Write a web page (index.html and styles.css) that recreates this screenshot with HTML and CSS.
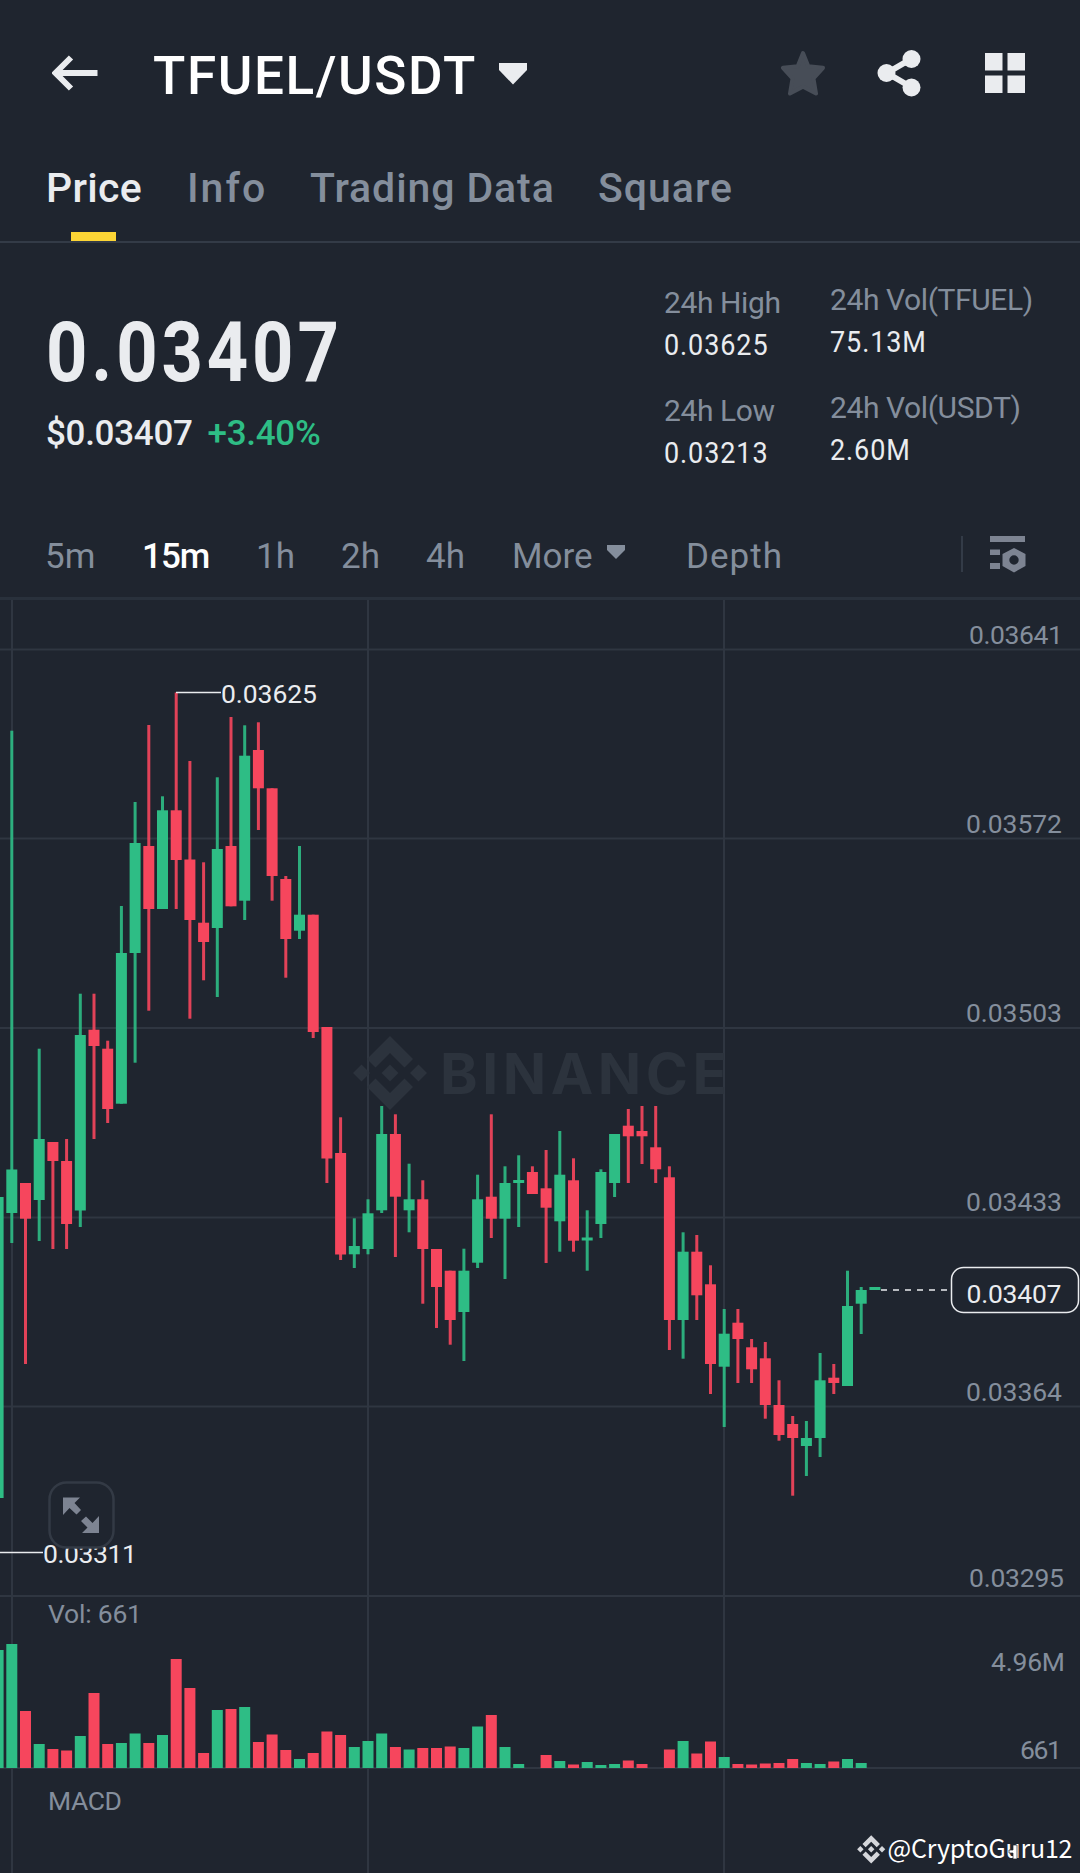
FILE: index.html
```html
<!DOCTYPE html>
<html lang="en">
<head>
    <meta charset="UTF-8">
    <meta name="viewport" content="width=device-width, initial-scale=1.0">
    <title>TFUEL/USDT</title>
    <link rel="stylesheet" href="styles.css">
</head>
<body>

<header class="topbar">
    <svg class="back" width="46" height="36" viewBox="0 0 46 36">
        <path d="M19 2.500L3.500 18L19 33.500M4 18H45.500" fill="none" stroke="#eaecef" stroke-width="6"/>
    </svg>
    <h1 class="pair">TFUEL/USDT</h1>
    <svg class="pair-caret" width="28" height="22" viewBox="0 0 28 22">
        <path d="M0 0H28V7L14 21.500L0 7Z" fill="#eaecef"/>
    </svg>
    <div class="actions">
        <svg width="46" height="46" viewBox="0 0 46 46">
            <path d="M23 3L28.300 16.200L43 17.800L33.500 28.500L36 43.500L23 36.800L10 43.500L12.500 28.500L3 17.800L17.700 16.200Z" fill="#474d57" stroke="#474d57" stroke-width="4" stroke-linejoin="round"/>
        </svg>
        <svg width="44" height="48" viewBox="0 0 44 48">
            <path d="M34 10L10 24L34 38" fill="none" stroke="#eaecef" stroke-width="6"/>
            <circle cx="34.500" cy="10" r="9" fill="#eaecef"/>
            <circle cx="9.500" cy="24" r="9" fill="#eaecef"/>
            <circle cx="34.500" cy="38.500" r="9" fill="#eaecef"/>
        </svg>
        <svg width="40" height="40" viewBox="0 0 40 40">
            <path d="M0 0H17.500V17.500H0ZM22.500 0H40V17.500H22.500ZM0 22.500H17.500V40H0ZM22.500 22.500H40V40H22.500Z" fill="#eaecef"/>
        </svg>
    </div>
</header>

<nav class="tabs">
    <a class="tab active">Price</a>
    <a class="tab info">Info</a>
    <a class="tab trading">Trading Data</a>
    <a class="tab square">Square</a>
</nav>

<section class="summary">
    <div class="quote">
        <div class="last">0.03407</div>
        <div class="sub"><span class="usd">$0.03407</span><span class="change">+3.40%</span></div>
    </div>
    <div class="stats range">
        <div class="label">24h High</div>
        <div class="value">0.03625</div>
        <div class="label">24h Low</div>
        <div class="value">0.03213</div>
    </div>
    <div class="stats volume">
        <div class="label">24h Vol(TFUEL)</div>
        <div class="value">75.13M</div>
        <div class="label">24h Vol(USDT)</div>
        <div class="value">2.60M</div>
    </div>
</section>

<div class="intervals">
    <span class="m5">5m</span>
    <span class="m15">15m</span>
    <span class="h1">1h</span>
    <span class="h2">2h</span>
    <span class="h4">4h</span>
    <span class="more">More</span>
    <svg class="more-caret" width="18" height="14" viewBox="0 0 18 14"><path d="M0 0H18V5L9 14L0 5Z" fill="#848e9c"/></svg>
    <span class="depth">Depth</span>
    <i class="divider"></i>
    <svg class="settings" width="36" height="38" viewBox="0 0 36 38">
        <path d="M0 1H35V7H0ZM0 14.500H10V20H0ZM0 28H10V34H0Z" fill="#7d8492"/>
        <path fill-rule="evenodd" d="M24 13L35.500 19V31L24 37.500L12.500 31V19ZM24 20.300A4.700 4.700 0 1 0 24 29.700A4.700 4.700 0 1 0 24 20.300Z" fill="#7d8492"/>
    </svg>
</div>

<svg class="chart" width="1080" height="1273" viewBox="0 600 1080 1273">
    <!-- grid -->
    <g class="grid">
        <path d="M0 649.500H1080M0 838.500H1080M0 1028H1080M0 1217.500H1080M0 1406.500H1080M0 1596H1080M0 1768H1080"/>
        <path d="M12 599V1873M368 599V1873M724 599V1873"/>
    </g>

    <!-- watermark -->
    <g class="watermark">
        <g id="logo">
            <path d="M390 1036L413 1059L404.500 1067.500L390 1053L375.500 1067.500L367 1059Z"/>
            <path d="M390 1110L413 1087L404.500 1078.500L390 1093L375.500 1078.500L367 1087Z"/>
            <path d="M390 1064.500L398.500 1073L390 1081.500L381.500 1073Z"/>
            <path d="M361.500 1064.500L370 1073L361.500 1081.500L353 1073Z"/>
            <path d="M418.500 1064.500L427 1073L418.500 1081.500L410 1073Z"/>
        </g>
        <text x="440" y="1093.500" textLength="287">BINANCE</text>
    </g>

    <g id="candles"></g>
    <g id="volumes"></g>

    <!-- high / low markers -->
    <path class="marker" d="M176 692.500H221M0 1552.500H43"/>
    <text class="mark" x="221" y="702.500" textLength="96">0.03625</text>
    <text class="mark" x="43" y="1562.500" textLength="94">0.03311</text>

    <!-- fullscreen button -->
    <rect class="expand" x="49.500" y="1482.500" width="64" height="65" rx="17"/>
    <path d="M63 1497.500H80L74.500 1503L81 1510L76.500 1514.500L69.500 1508L63 1515ZM99 1533H82L87.500 1527.500L81 1521L86 1516.500L92.500 1523L99 1516Z" fill="#7d8492"/>

    <!-- last price -->
    <path class="dash" d="M881 1290H947"/>
    <rect class="last-box" x="951.500" y="1267.500" width="127" height="45" rx="12"/>
    <text class="mark" x="966.500" y="1302.500" textLength="95">0.03407</text>

    <!-- axis -->
    <g class="axis">
        <text x="969" y="644" textLength="94">0.03641</text>
        <text x="966" y="832.500" textLength="96">0.03572</text>
        <text x="966" y="1021.500" textLength="96">0.03503</text>
        <text x="966" y="1211" textLength="96">0.03433</text>
        <text x="966" y="1400.500" textLength="96">0.03364</text>
        <text x="969" y="1586.500" textLength="95">0.03295</text>
        <text x="991" y="1671" textLength="74">4.96M</text>
        <text x="1020" y="1759" textLength="42">661</text>
        <text x="48" y="1622.500" textLength="94">Vol: 661</text>
        <text x="48" y="1810" textLength="74">MACD</text>
    </g>

    <g class="author">
        <use href="#logo" transform="translate(723 1441.600) scale(.38)"/>
        <text x="887.500" y="1857.500" textLength="185">@CryptoGuru12</text>
        <!-- text cursor -->
        <path class="cursor" d="M1009 1850H1013V1845H1017V1859H1013V1853H1009Z"/>
    </g>
</svg>

<script src="chart.js"></script>
</body>
</html>
```

FILE: chart.js
```js
// direction, high, body top, body bottom, low, volume height
const candles = [
    ['up', 1197, 1197, 1498, 1498, 118],
    ['up', 730.7, 1169.5, 1213, 1243, 124],
    ['down', 1183, 1183, 1218.7, 1364, 57],
    ['up', 1048.7, 1139, 1200, 1241, 24],
    ['down', 1142, 1142, 1161, 1249, 19],
    ['down', 1139, 1161, 1224, 1249, 17.5],
    ['up', 993.7, 1035, 1210.5, 1227, 32],
    ['down', 993.7, 1029.7, 1046, 1139, 75],
    ['down', 1040.7, 1048.7, 1109, 1123, 24],
    ['up', 906, 953, 1103.7, 1103.7, 25],
    ['up', 802, 843, 953, 1062.7, 34.5],
    ['down', 725, 846, 909, 1010.7, 25],
    ['up', 796.3, 810.3, 909, 909, 33],
    ['down', 692.5, 810.3, 860, 909, 109],
    ['down', 761, 859.5, 920, 1018.7, 80],
    ['down', 862.3, 922.7, 942, 980.3, 15],
    ['up', 777.3, 849, 928, 997, 58],
    ['down', 717, 846, 906.3, 906.3, 59],
    ['up', 725.3, 755.7, 900.7, 920, 61],
    ['down', 722.3, 750, 788.3, 830, 26],
    ['down', 788.3, 788.3, 876, 900.7, 33.5],
    ['down', 876, 879, 939, 977.7, 18],
    ['up', 846, 914.7, 930.7, 939, 9],
    ['down', 914.7, 914.7, 1032, 1038, 15],
    ['down', 1027, 1027, 1158.5, 1183, 36.5],
    ['down', 1117.3, 1153, 1254.5, 1260, 33],
    ['up', 1218.3, 1246, 1254.3, 1268, 21],
    ['up', 1199.3, 1213.3, 1249, 1254.3, 27],
    ['up', 1106, 1134, 1210.3, 1213, 34.5],
    ['down', 1114.3, 1134, 1196.7, 1257, 21],
    ['up', 1163.7, 1199.3, 1210.3, 1232.3, 18.5],
    ['down', 1180.3, 1199.3, 1249, 1303.7, 20],
    ['down', 1249, 1249, 1287, 1328, 20],
    ['down', 1270.7, 1270.7, 1320, 1344.7, 21.5],
    ['up', 1248.7, 1270.7, 1312, 1361, 20],
    ['up', 1174.7, 1199.3, 1262.7, 1268, 41.5],
    ['down', 1114.3, 1196.7, 1218.7, 1238, 53],
    ['up', 1166.3, 1183, 1218.7, 1279, 21],
    ['up', 1155.3, 1180, 1183, 1227, 4],
    ['down', 1166.3, 1172, 1194, 1194, 0],
    ['down', 1150, 1188.3, 1207.7, 1263, 13],
    ['up', 1131, 1174.7, 1221.3, 1251.7, 7],
    ['down', 1158.3, 1180.3, 1240.7, 1251.7, 3.5],
    ['up', 1210.3, 1237.5, 1240.5, 1270.7, 6],
    ['up', 1169.3, 1172, 1224, 1238, 3],
    ['up', 1134, 1134, 1183, 1197, 4],
    ['down', 1109, 1125.7, 1136.3, 1183, 7.5],
    ['down', 1106, 1131, 1136.3, 1164, 4],
    ['down', 1106, 1147.3, 1169.3, 1183, 0],
    ['down', 1166.3, 1177.3, 1320, 1350, 18.5],
    ['up', 1232.3, 1251.7, 1320, 1358.7, 27],
    ['down', 1235, 1251.7, 1295.3, 1320, 14.5],
    ['down', 1265.3, 1284.3, 1364, 1394, 26.5],
    ['up', 1309, 1333.7, 1366.7, 1427, 11],
    ['down', 1309, 1322.7, 1339, 1383, 4],
    ['down', 1339, 1347.3, 1369.3, 1383, 3.5],
    ['down', 1342, 1358.3, 1405, 1418.7, 4.5],
    ['down', 1380.3, 1405, 1435, 1440.7, 5],
    ['down', 1416, 1424, 1438, 1495.7, 9],
    ['up', 1421, 1438, 1446, 1476, 5],
    ['up', 1353, 1380.3, 1438, 1457, 4],
    ['down', 1364, 1377.7, 1383, 1394, 6.5],
    ['up', 1270.7, 1306, 1386, 1386, 9],
    ['up', 1287, 1290, 1303.7, 1334, 5],
    ['up', 1287, 1287, 1290, 1290, 0]
];

const step = 13.7;
const baseline = 1768;

function addRect(parent, cls, x, y, width, height) {
    const rect = document.createElementNS('http://www.w3.org/2000/svg', 'rect');
    rect.setAttribute('class', cls);
    rect.setAttribute('x', x);
    rect.setAttribute('y', y);
    rect.setAttribute('width', width);
    rect.setAttribute('height', height);
    parent.appendChild(rect);
}

const candleGroup = document.getElementById('candles');
const volumeGroup = document.getElementById('volumes');

candles.forEach(([dir, high, top, bottom, low, volume], i) => {
    const x = -1.9 + step * i;
    addRect(candleGroup, dir + ' wick', x - 1.5, high, 3, low - high);
    addRect(candleGroup, dir, x - 5.5, top, 11, bottom - top);
    addRect(volumeGroup, dir, x - 5.5, baseline - volume, 11, volume);
});
```

FILE: styles.css
```css
* {
    box-sizing: border-box;
}

body {
    margin: 0;
    width: 1080px;
    height: 1873px;
    overflow: hidden;
    background-color: #1f252f;
    color: #eaecef;
    font-family: Roboto, "Liberation Sans", sans-serif;
}

svg {
    display: block;
    flex-shrink: 0;
}

.topbar {
    display: flex;
    align-items: center;
    height: 146px;
    padding: 0 55px 0 52px;
}

.pair {
    margin: 6px 0 0 55px;
    font-size: 53px;
    font-weight: 500;
    color: #fff;
    letter-spacing: 1.6px;
}

.pair-caret {
    margin: 2px 0 0 22px;
}

.actions {
    display: flex;
    align-items: center;
    margin-left: auto;
}

.actions svg:nth-child(2) {
    margin: 0 64px 0 51px;
}

.tabs {
    display: flex;
    height: 97px;
    padding: 17px 0 0 46px;
    border-bottom: 2px solid #333b47;
    font-size: 41px;
    font-weight: 500;
    line-height: 50px;
    letter-spacing: 1px;
    color: #848e9c;
}

.tab {
    position: relative;
    white-space: nowrap;
}

.tab.active {
    width: 141px;
    letter-spacing: .3px;
    color: #eaecef;
}

.tab.info {
    width: 123px;
    letter-spacing: 2px;
}

.tab.trading {
    width: 288px;
    letter-spacing: .9px;
}

.tab.active::after {
    content: "";
    position: absolute;
    left: 25px;
    bottom: 0;
    width: 45px;
    height: 9px;
    background-color: #fcd535;
}

.summary {
    display: flex;
    height: 281px;
}

.quote {
    width: 664px;
    padding: 60px 0 0 46px;
}

.last {
    font-size: 84px;
    font-weight: 700;
    line-height: 100px;
    letter-spacing: 4.5px;
    transform: scaleX(.86);
    transform-origin: left;
}

.sub {
    display: flex;
    gap: 15px;
    margin-top: 10px;
    font-size: 35px;
    font-weight: 500;
    line-height: 42px;
    letter-spacing: -.3px;
}

.change {
    color: #2ebd85;
}

.stats {
    font-size: 30px;
    line-height: 40px;
    white-space: nowrap;
}

.range {
    width: 166px;
    padding-top: 40px;
}

.volume {
    padding-top: 37px;
}

.label {
    letter-spacing: -.4px;
    color: #848e9c;
}

.value {
    margin: 2px 0 26px;
    letter-spacing: 1px;
    transform: scaleX(.9);
    transform-origin: left;
}

.intervals {
    display: flex;
    align-items: center;
    height: 73px;
    padding: 0 54px 9px 45px;
    font-size: 35px;
    color: #848e9c;
}

.m5 {
    width: 97px;
}

.m15 {
    width: 114px;
    font-weight: 500;
    letter-spacing: -1px;
    color: #fff;
}

.h1 {
    width: 85px;
}

.h2 {
    width: 85px;
}

.h4 {
    width: 86px;
}

.more {
    width: 95px;
}

.more-caret {
    margin: -8px 61px 0 0;
}

.depth {
    letter-spacing: 1px;
}

.divider {
    width: 2px;
    height: 36px;
    margin: -4px 27px 0 auto;
    background-color: #333b47;
}

.settings {
    margin-top: -4px;
}

.chart {
    box-sizing: content-box;
    border-top: 3px solid #29313c;
}

.chart text {
    font-size: 26.500px;
}

.grid {
    stroke: #2f3641;
    stroke-width: 2;
}

.chart .watermark,
.chart .watermark text {
    fill: #2c333d;
    font-family: Inter, sans-serif;
    font-size: 57px;
    font-weight: 700;
}

.up {
    fill: #2ebd85;
}

.down {
    fill: #f6465d;
}

.wick {
    opacity: .9;
}

.marker {
    stroke: #eaecef;
    stroke-width: 1.500;
}

.mark {
    fill: #eaecef;
}

.expand {
    fill: #1f252f;
    stroke: #333a45;
    stroke-width: 2.500;
}

.dash {
    stroke: #eaecef;
    stroke-width: 1.500;
    stroke-dasharray: 6 6;
}

.last-box {
    fill: #1f252f;
    stroke: #eaecef;
    stroke-width: 1.500;
}

.axis {
    fill: #848e9c;
}

.author {
    fill: #d5d7db;
}

.author .cursor {
    fill: #fff;
    stroke: #1f252f;
    stroke-width: .7;
}

.chart .author text {
    fill: #fff;
    font-family: "Noto Sans CJK SC", sans-serif;
    font-size: 25px;
}
```
